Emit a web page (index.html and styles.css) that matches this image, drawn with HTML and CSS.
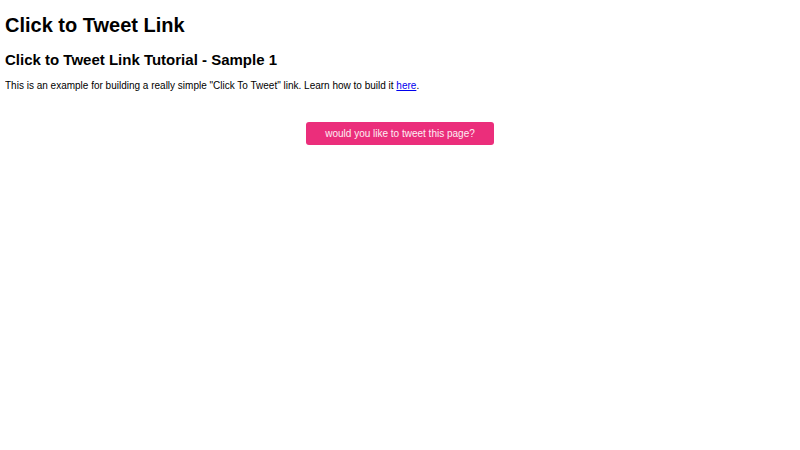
FILE: index.html
```html
<!DOCTYPE html>
<html lang="en">
<head>
    <meta charset="UTF-8">
    <meta name="viewport" content="width=device-width, initial-scale=1.0">
    <title>Click to Tweet Link</title>
    <link rel="stylesheet" href="styles.css">
</head>
<body>
    <h1>Click to Tweet Link</h1>
    <h2>Click to Tweet Link Tutorial - Sample 1</h2>
    <p>This is an example for building a really simple "Click To Tweet" link. Learn how to build it <a href="#">here</a>.</p>

    <div class="tweet-container">
        <a class="tweet-button" href="#">would you like to tweet this page?</a>
    </div>
</body>
</html>
```

FILE: styles.css
```css
body {
    font-family: "Liberation Sans", Arial, sans-serif;
    font-size: 10px;
    margin: 5px;
    color: #000;
    background: #fff;
}
h1 {
    font-size: 20px;
    margin: 9.4px 0 13.4px;
}
h2 {
    font-size: 15px;
    margin: 12.5px 0;
}
p {
    margin: 10px 0;
}
a {
    color: #0000ee;
}
.tweet-container {
    display: flex;
    justify-content: center;
    margin-top: 31px;
}
.tweet-button {
    display: inline-block;
    background-color: #eb2e7b;
    color: #fdeef4;
    text-decoration: none;
    padding: 6px 19px;
    border-radius: 3px;
    line-height: 11px;
}
```
